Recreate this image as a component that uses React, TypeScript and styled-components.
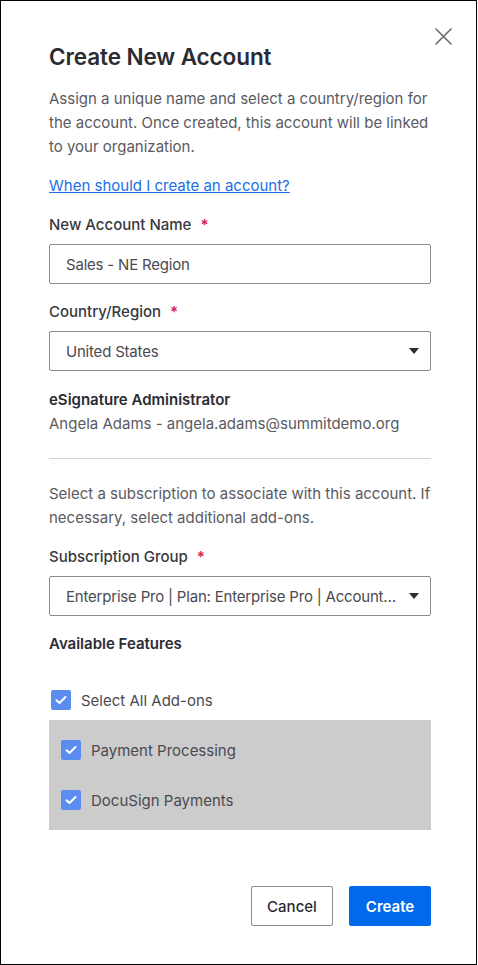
import React from "react";
import styled, { createGlobalStyle } from "styled-components";

const Global = createGlobalStyle`
  html, body { margin: 0; padding: 0; background: #fff; }
  * { box-sizing: border-box; }
  body { font-family: Inter, "Noto Sans", Arial, sans-serif; -webkit-font-smoothing: antialiased; }
`;

const Frame = styled.div`
  width: 477px;
  height: 965px;
  border: 1px solid #000;
  position: relative;
  background: #fff;
  padding: 40px 45px 0 48px;
  display: flex;
  flex-direction: column;
`;

const CloseButton = styled.button`
  position: absolute;
  top: 24px;
  right: 22px;
  width: 22px;
  height: 22px;
  padding: 0;
  border: none;
  background: transparent;
  display: flex;
  align-items: center;
  justify-content: center;
  cursor: pointer;
`;

const Title = styled.h1`
  margin: 0;
  font-size: 22.5px;
  line-height: 32px;
  font-weight: 600;
  color: #2b2b33;
  letter-spacing: -0.1px;
`;

const Paragraph = styled.p<{ $top?: number }>`
  margin: ${(p) => p.$top ?? 0}px 0 0;
  font-size: 15px;
  line-height: 24px;
  color: #5a5a5f;
`;

const HelpLink = styled.a`
  margin-top: 15px;
  font-size: 15px;
  line-height: 24px;
  color: #1b6fe8;
  text-decoration: underline;
  align-self: flex-start;
`;

const Label = styled.div<{ $top: number }>`
  margin-top: ${(p) => p.$top}px;
  font-size: 15px;
  line-height: 24px;
  color: #38383d;
  font-weight: 500;
  display: flex;
  gap: 9px;
`;

const Required = styled.span`
  color: #d3204f;
  font-weight: 600;
`;

const Field = styled.div`
  margin-top: 7px;
  height: 40px;
  border: 1px solid #8a8a8f;
  border-radius: 2px;
  display: flex;
  align-items: center;
  padding: 0 11px 0 16px;
  font-size: 15px;
  color: #4a4a50;
  gap: 12px;
`;

const FieldText = styled.span`
  flex: 1;
  white-space: nowrap;
  overflow: hidden;
  text-overflow: ellipsis;
  letter-spacing: -0.2px;
`;

const Caret = styled.span`
  width: 0;
  height: 0;
  border-left: 5.5px solid transparent;
  border-right: 5.5px solid transparent;
  border-top: 6px solid #2b2b33;
  flex-shrink: 0;
`;

const Strong = styled.div<{ $top: number }>`
  margin-top: ${(p) => p.$top}px;
  font-size: 15px;
  line-height: 24px;
  font-weight: 600;
  color: #2b2b33;
`;

const Plain = styled.div`
  font-size: 15px;
  line-height: 23px;
  color: #5a5a5f;
`;

const Divider = styled.hr`
  margin: 23px 0 0;
  border: none;
  border-top: 1px solid #d0d0d0;
  height: 0;
`;

const Spacer = styled.div<{ $h: number }>`
  height: ${(p) => p.$h}px;
  flex-shrink: 0;
`;

const CheckRow = styled.label<{ $indent?: boolean }>`
  display: flex;
  align-items: center;
  gap: 10px;
  height: ${(p) => (p.$indent ? 50 : 40)}px;
  padding-left: ${(p) => (p.$indent ? 12 : 2)}px;
  font-size: 15px;
  color: #4a4a50;
`;

const Box = styled.span`
  width: 20px;
  height: 20px;
  border-radius: 2px;
  background: #5b8df0;
  display: flex;
  align-items: center;
  justify-content: center;
  flex-shrink: 0;
`;

const AddOnPanel = styled.div`
  background: #cccccc;
  padding: 5px 0;
  display: flex;
  flex-direction: column;
`;

const Footer = styled.div`
  margin-top: 56px;
  display: flex;
  justify-content: flex-end;
  gap: 16px;
`;

const Button = styled.button<{ $primary?: boolean }>`
  height: 40px;
  width: 82px;
  padding: 0;
  border-radius: 2px;
  font-family: inherit;
  font-size: 15px;
  font-weight: ${(p) => (p.$primary ? 600 : 500)};
  border: 1px solid ${(p) => (p.$primary ? "#0069ec" : "#8a8a8f")};
  background: ${(p) => (p.$primary ? "#0069ec" : "#fff")};
  color: ${(p) => (p.$primary ? "#fff" : "#2b2b33")};
  cursor: pointer;
`;

const Check = () => (
  <svg width="12" height="10" viewBox="0 0 12 10" fill="none">
    <path d="M1.5 5.2 L4.5 8 L10.5 2" stroke="#fff" strokeWidth="2" strokeLinecap="round" strokeLinejoin="round" />
  </svg>
);

const Checkbox: React.FC<{ label: string; indent?: boolean }> = ({ label, indent }) => (
  <CheckRow $indent={indent}>
    <Box>
      <Check />
    </Box>
    {label}
  </CheckRow>
);

export default function App() {
  return (
    <>
      <Global />
      <Frame>
        <CloseButton aria-label="Close">
          <svg width="17" height="17" viewBox="0 0 17 17">
            <path d="M1 1 L16 16 M16 1 L1 16" stroke="#6b6b70" strokeWidth="1.6" strokeLinecap="round" />
          </svg>
        </CloseButton>
        <Title>Create New Account</Title>
        <Paragraph $top={14}>
          Assign a unique name and select a country/region for the account. Once created, this account will be linked to your organization.
        </Paragraph>
        <HelpLink href="#">When should I create an account?</HelpLink>
        <Label $top={15}>
          New Account Name <Required>*</Required>
        </Label>
        <Field>
          <FieldText>Sales - NE Region</FieldText>
        </Field>
        <Label $top={16}>
          Country/Region <Required>*</Required>
        </Label>
        <Field>
          <FieldText>United States</FieldText>
          <Caret />
        </Field>
        <Strong $top={17}>eSignature Administrator</Strong>
        <Plain>Angela Adams - angela.adams@summitdemo.org</Plain>
        <Divider />
        <Paragraph $top={23}>
          Select a subscription to associate with this account. If necessary, select additional add-ons.
        </Paragraph>
        <Label $top={15}>
          Subscription Group <Required>*</Required>
        </Label>
        <Field>
          <FieldText>Enterprise Pro | Plan: Enterprise Pro | Account Plan: Enterprise Pro</FieldText>
          <Caret />
        </Field>
        <Strong $top={16}>Available Features</Strong>
        <Spacer $h={24} />
        <Checkbox label="Select All Add-ons" />
        <AddOnPanel>
          <Checkbox label="Payment Processing" indent />
          <Checkbox label="DocuSign Payments" indent />
        </AddOnPanel>
        <Footer>
          <Button>Cancel</Button>
          <Button $primary>Create</Button>
        </Footer>
      </Frame>
    </>
  );
}
